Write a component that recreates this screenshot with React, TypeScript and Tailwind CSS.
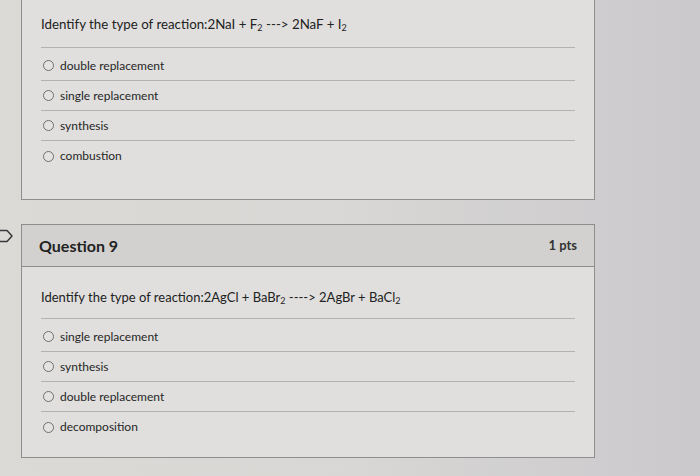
import React from "react";

const font = { fontFamily: "Lato, 'Open Sans', sans-serif" };

function Radio() {
    return <span className="ml-[2px] h-[11px] w-[11px] shrink-0 rounded-full border border-[#6f6f6f] bg-[#e4e3e1]"></span>;
}

function Options({ items }: { items: string[] }) {
    return (
        <div className="mt-[3px]">
            {items.map((item, i) => (
                <div
                    key={i}
                    className={`flex h-[30px] items-center gap-[6px] ${i < items.length - 1 ? "border-b border-[#b3b2b0]" : ""}`}
                >
                    <Radio />
                    <span className="text-[12px] text-[#262626]">{item}</span>
                </div>
            ))}
        </div>
    );
}

export default function App() {
    return (
        <div className="h-[476px] w-[700px] overflow-hidden bg-linear-to-r from-[#dbdad7] via-[#d8d7d5] to-[#cbc9cc]" style={font}>
            {/* Previous question (header scrolled off) */}
            <div className="flex">
                <div className="w-[21px] shrink-0"></div>
                <div className="w-[574px] border-x border-b border-[#8e8e8e] bg-[#e0dfdd] px-[19px] pb-[28px] pt-[14px]">
                    <p className="mb-[13px] text-[13.3px] leading-[20px] text-[#222]">
                        Identify the type of reaction:2NaI + F<sub className="text-[9px]">2</sub> ---&gt; 2NaF + I<sub className="text-[9px]">2</sub>
                    </p>
                    <div className="border-t border-[#b3b2b0]"></div>
                    <Options items={["double replacement", "single replacement", "synthesis", "combustion"]} />
                </div>
            </div>

            {/* Question 9 */}
            <div className="mt-[24px] flex">
                <div className="w-[21px] shrink-0 pt-[5px]">
                    <svg width="14" height="14" viewBox="0 0 14 14" fill="none">
                        <path d="M0 1.5 H7 L12 7 L7 12.5 H0" stroke="#3a3a3a" strokeWidth="1.5" strokeLinejoin="round" />
                    </svg>
                </div>
                <div className="w-[574px] border border-[#8e8e8e] bg-[#e0dfdd]">
                    <div className="flex h-[42px] items-center justify-between border-b border-[#8e8e8e] bg-[#d2d1cf] px-[17px]">
                        <span className="text-[16px] font-bold text-[#222]">Question 9</span>
                        <span className="text-[13px] font-bold text-[#333]">1 pts</span>
                    </div>
                    <div className="px-[19px] pb-[15px] pt-[20px]">
                        <p className="mb-[11px] text-[13px] leading-[20px] text-[#222]">
                            Identify the type of reaction:2AgCl + BaBr<sub className="text-[9px]">2</sub> ----&gt; 2AgBr + BaCl<sub className="text-[9px]">2</sub>
                        </p>
                        <div className="border-t border-[#b3b2b0]"></div>
                        <Options items={["single replacement", "synthesis", "double replacement", "decomposition"]} />
                    </div>
                </div>
            </div>
        </div>
    );
}
